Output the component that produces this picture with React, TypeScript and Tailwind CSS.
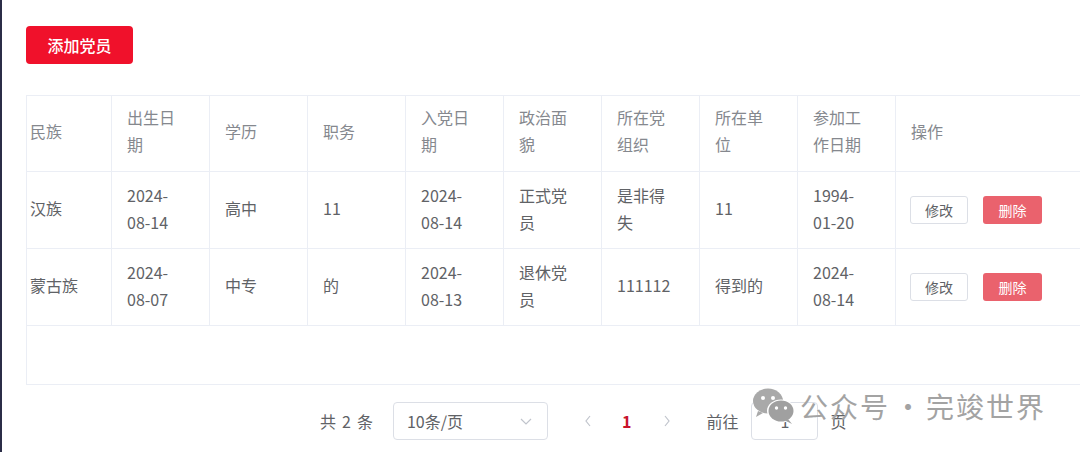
import React from "react";

const FONT = { fontFamily: '"Noto Sans CJK SC", "Noto Sans", "Liberation Sans", sans-serif' };

type Row = { cells: string[][] };

const headers: string[][] = [
  ["民族"],
  ["出生日", "期"],
  ["学历"],
  ["职务"],
  ["入党日", "期"],
  ["政治面", "貌"],
  ["所在党", "组织"],
  ["所在单", "位"],
  ["参加工", "作日期"],
];

const rows: Row[] = [
  {
    cells: [["汉族"], ["2024-", "08-14"], ["高中"], ["11"], ["2024-", "08-14"], ["正式党", "员"], ["是非得", "失"], ["11"], ["1994-", "01-20"]],
  },
  {
    cells: [["蒙古族"], ["2024-", "08-07"], ["中专"], ["的"], ["2024-", "08-13"], ["退休党", "员"], ["111112"], ["得到的"], ["2024-", "08-14"]],
  },
];

function Cell({ lines, first, header }: { lines: string[]; first?: boolean; header?: boolean }) {
  return (
    <div
      className={`flex shrink-0 items-center border-r border-[#ebeef5] ${first ? "w-[85px] pl-[3px]" : "w-[98px] pl-[15px]"} ${header ? "pb-[5px] text-[#85888e]" : "pb-[3px] text-[#606266]"}`}
    >
      <div className="text-[16px] leading-[27px]">
        {lines.map((l, i) => (
          <div key={i} className="whitespace-nowrap">{l}</div>
        ))}
      </div>
    </div>
  );
}

function WeChatIcon() {
  return (
    <svg width="48" height="40" viewBox="0 0 48 40">
      <ellipse cx="18" cy="15" rx="15" ry="12.5" fill="#a9a9a9" />
      <path d="M8 25 L6 31 L13 27 Z" fill="#a9a9a9" />
      <circle cx="13" cy="12" r="2" fill="#fff" />
      <circle cx="23" cy="12" r="2" fill="#fff" />
      <ellipse cx="31" cy="25" rx="14" ry="11.5" fill="#ffffff" />
      <ellipse cx="31" cy="25" rx="12.5" ry="10.5" fill="#a0a0a0" />
      <path d="M38 33 L42 38 L35 34.5 Z" fill="#a0a0a0" />
      <circle cx="26.5" cy="22" r="1.7" fill="#fff" />
      <circle cx="35.5" cy="22" r="1.7" fill="#fff" />
    </svg>
  );
}

export default function App() {
  return (
    <div className="flex h-[452px] w-[1080px] overflow-hidden bg-white" style={FONT}>
      <div className="w-[2px] shrink-0 bg-[#2b2d47]" />
      <div className="relative flex min-w-0 flex-1 flex-col pl-[24px] pt-[26px]">
        <button className="h-[38px] w-[107px] rounded-[4px] bg-[#f0112b] text-[16px] font-medium text-white">添加党员</button>

        <div className="mt-[31px] w-[1200px] border-y border-l border-[#ebeef5]">
          <div className="flex h-[76px] border-b border-[#ebeef5]">
            {headers.map((h, i) => (
              <Cell key={i} lines={h} first={i === 0} header />
            ))}
            <div className="flex flex-1 items-center pb-[5px] pl-[15px] text-[16px] text-[#85888e]">操作</div>
          </div>
          {rows.map((r, ri) => (
            <div key={ri} className="flex h-[77px] border-b border-[#ebeef5]">
              {r.cells.map((c, i) => (
                <Cell key={i} lines={c} first={i === 0} />
              ))}
              <div className="flex flex-1 items-center gap-[15px] pl-[14px]">
                <button className="h-[28px] w-[58px] rounded-[3px] border border-[#dcdfe6] bg-white text-[14px] text-[#606266]">修改</button>
                <button className="h-[28px] w-[59px] rounded-[3px] bg-[#ea626d] text-[14px] text-white">删除</button>
              </div>
            </div>
          ))}
          <div className="h-[58px]" />
        </div>

        <div className="mt-[17px] flex h-[38px] items-center text-[16px] text-[#606266]">
          <div className="ml-[294px] flex gap-[6px]">
            <span>共</span>
            <span>2</span>
            <span>条</span>
          </div>
          <div className="ml-[20px] flex h-[38px] w-[155px] items-center justify-between rounded-[4px] border border-[#dcdfe6] pl-[13px] pr-[14px]">
            <span>10条/页</span>
            <svg width="14" height="14" viewBox="0 0 14 14">
              <path d="M2 5 L7 10 L12 5" fill="none" stroke="#c0c4cc" strokeWidth="1.2" />
            </svg>
          </div>
          <svg className="ml-[35px]" width="10" height="14" viewBox="0 0 10 14">
            <path d="M7 2 L3 7 L7 12" fill="none" stroke="#c0c4cc" strokeWidth="1.2" />
          </svg>
          <span className="ml-[29px] font-bold text-[#c8142c]">1</span>
          <svg className="ml-[31px]" width="10" height="14" viewBox="0 0 10 14">
            <path d="M3 2 L7 7 L3 12" fill="none" stroke="#c0c4cc" strokeWidth="1.2" />
          </svg>
          <span className="ml-[34px]">前往</span>
          <div className="ml-[13px] flex h-[38px] w-[67px] items-center justify-center rounded-[4px] border border-[#dcdfe6]">1</div>
          <span className="ml-[12px]">页</span>
        </div>

        <div className="absolute left-[748px] top-[386px] flex items-center">
          <WeChatIcon />
          <span className="ml-[2px] text-[28px] leading-[40px] tracking-[2px] text-[#a3a3a3]">公众号</span>
          <span className="mx-[4px] text-[28px] leading-[40px] text-[#a3a3a3]">·</span>
          <span className="text-[28px] leading-[40px] tracking-[2px] text-[#a3a3a3]">完竣世界</span>
        </div>
      </div>
    </div>
  );
}
